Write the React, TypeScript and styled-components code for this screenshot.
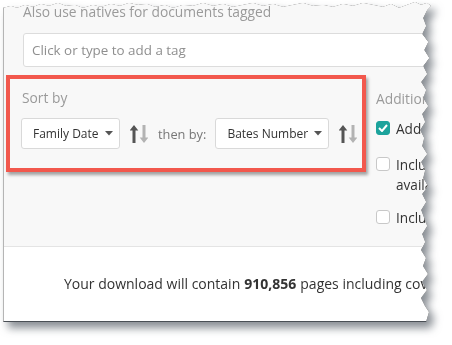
import styled, { createGlobalStyle } from "styled-components"

const GlobalStyle = createGlobalStyle`
  html, body {
    margin: 0;
    padding: 0;
    background: #ffffff;
    font-family: "Open Sans", "Liberation Sans", sans-serif;
  }
`

// torn paper outline of the clipped screenshot
const topEdge = [
  [0, 8], [8, 6], [14, 8], [22, 5], [30, 7], [38, 4], [46, 6], [55, 3], [63, 6], [72, 5],
  [80, 8], [90, 5], [98, 7], [108, 4], [117, 6], [126, 3], [135, 5], [144, 4], [152, 7],
  [162, 5], [170, 8], [180, 5], [190, 6], [200, 3], [210, 6], [220, 4], [230, 7], [240, 5],
  [250, 3], [260, 6], [270, 4], [280, 7], [290, 5], [300, 3], [310, 6], [320, 5], [330, 7],
  [340, 4], [350, 6], [360, 3], [370, 5], [380, 7], [388, 4], [396, 8], [404, 5], [412, 2],
  [418, 5], [424, 3], [428, 6],
]
const rightEdge = [
  [424, 10], [420, 18], [423, 26], [419, 34], [425, 42], [421, 50], [426, 58], [420, 66],
  [424, 74], [418, 82], [423, 90], [420, 98], [425, 106], [419, 114], [422, 122], [417, 130],
  [421, 138], [419, 146], [424, 154], [418, 162], [422, 170], [420, 178], [425, 186],
  [419, 194], [423, 202], [418, 210], [421, 218], [424, 226], [419, 234], [422, 242],
  [418, 250], [423, 258], [420, 266], [425, 274], [419, 282], [424, 290], [418, 298],
  [422, 306], [426, 312], [423, 322],
]
const tornPath = [...topEdge, ...rightEdge, [0, 322]]
  .map(([x, y]) => `${x}px ${y}px`)
  .join(", ")

function SortIcon() {
  return (
    <svg width="18" height="18" viewBox="0 0 18 18">
      <polygon points="4,0 8.3,5.5 5.5,5.5 5.5,18 2.5,18 2.5,5.5 -0.3,5.5" fill="#555" />
      <polygon points="14,18 18.3,12.5 15.5,12.5 15.5,0 12.5,0 12.5,12.5 9.7,12.5" fill="#b3b3b3" />
    </svg>
  )
}

function Caret() {
  return (
    <svg width="8" height="5" viewBox="0 0 8 5">
      <polygon points="0,0 8,0 4,4.5" fill="#555" />
    </svg>
  )
}

function App() {
  return (
    <Page>
      <GlobalStyle />
      <Shadow>
        <Panel>
          <Upper>
            <Faded>Also use natives for documents tagged</Faded>
            <TagInput>Click or type to add a tag</TagInput>
            <SortRow>
              <SortBox>
                <Faded>Sort by</Faded>
                <Controls>
                  <Select $width={99}>
                    Family Date <Caret />
                  </Select>
                  <SortIcon />
                  <ThenBy>then by:</ThenBy>
                  <Select $width={114}>
                    Bates Number <Caret />
                  </Select>
                  <SortIcon />
                </Controls>
              </SortBox>
              <Additional>
                <Faded>Additional options</Faded>
                <Option $top={10}>
                  <Check $checked>
                    <svg width="10" height="8" viewBox="0 0 10 8">
                      <polyline points="1,4 4,7 9,1" fill="none" stroke="#fff" strokeWidth="2" />
                    </svg>
                  </Check>
                  <span>Add cover sheets</span>
                </Option>
                <Option $top={16}>
                  <Check />
                  <span>Include natives where<br />available</span>
                </Option>
                <Option $top={13}>
                  <Check />
                  <span>Include text</span>
                </Option>
              </Additional>
            </SortRow>
          </Upper>
          <Footer>
            Your download will contain <b>910,856</b> pages including cover sheets
          </Footer>
        </Panel>
      </Shadow>
    </Page>
  )
}

export default App

const Page = styled.div`
  width: 452px;
  height: 345px;
  overflow: hidden;
  padding-left: 3px;
  box-sizing: border-box;
`

const Shadow = styled.div`
  width: 429px;
  filter: drop-shadow(0 0 0.7px rgba(0, 0, 0, 0.75)) drop-shadow(5px 6px 4px rgba(40, 50, 60, 0.55));
`

const Panel = styled.div`
  width: 429px;
  height: 322px;
  display: flex;
  flex-direction: column;
  overflow: hidden;
  clip-path: polygon(${tornPath});
  background: #fff;
  border-left: 1px solid #b5b5b5;
  border-bottom: 1px solid #4a4f55;
  box-sizing: border-box;
`

const Faded = styled.div`
  font-size: 13.8px;
  line-height: 20px;
  color: #9a9a9a;
  white-space: nowrap;
`

const Upper = styled.div`
  height: 247px;
  flex-shrink: 0;
  background: #f8f8f8;
  border-bottom: 1px solid #e4e4e4;
  padding: 2px 0 0 2px;
  box-sizing: border-box;
  display: flex;
  flex-direction: column;
  color: #333;

  & > ${Faded} {
    margin-left: 17px;
  }
`

const TagInput = styled.div`
  margin: 11px 0 0 17px;
  width: 440px;
  height: 34px;
  box-sizing: border-box;
  background: #fff;
  border: 1px solid #dcdcdc;
  border-radius: 3px;
  padding-left: 8px;
  display: flex;
  align-items: center;
  font-size: 13.4px;
  color: #8f8f8f;
  white-space: nowrap;
`

const SortRow = styled.div`
  display: flex;
  align-items: flex-start;
  margin-top: 8px;
  gap: 10px;
`

const SortBox = styled.div`
  width: 360px;
  height: 97px;
  box-sizing: border-box;
  border: 4.5px solid #f2584d;
  box-shadow: 2px 3px 3px rgba(0, 0, 0, 0.35);
  padding: 9px 0 0 11px;
  flex-shrink: 0;

  ${Faded} {
    margin-left: 1px;
  }
`

const Controls = styled.div`
  display: flex;
  align-items: center;
  gap: 10px;
  margin-top: 10px;

  svg {
    flex-shrink: 0;
  }
`

const Select = styled.div<{ $width: number }>`
  width: ${(p) => p.$width}px;
  height: 31px;
  flex-shrink: 0;
  box-sizing: border-box;
  background: #fff;
  border: 1px solid #d9d9d9;
  border-radius: 3px;
  display: flex;
  align-items: center;
  gap: 6px;
  padding: 0 0 0 11px;
  font-size: 12px;
  color: #333;
  white-space: nowrap;
`

const ThenBy = styled.span`
  font-size: 12.8px;
  color: #777;
  white-space: nowrap;
  margin-right: -1px;
`

const Additional = styled.div`
  display: flex;
  flex-direction: column;
  padding-top: 14px;
`

const Option = styled.div<{ $top: number }>`
  display: flex;
  align-items: flex-start;
  gap: 6px;
  margin-top: ${(p) => p.$top}px;
  font-size: 13.6px;
  line-height: 20px;
  color: #333;
  white-space: nowrap;
`

const Check = styled.div<{ $checked?: boolean }>`
  width: 14px;
  height: 14px;
  margin-top: 2px;
  box-sizing: border-box;
  border-radius: 3px;
  flex-shrink: 0;
  display: flex;
  align-items: center;
  justify-content: center;
  background: ${(p) => (p.$checked ? "#1ca39c" : "#fff")};
  border: 1px solid ${(p) => (p.$checked ? "#1ca39c" : "#c8c8c8")};
`

const Footer = styled.div`
  flex: 1;
  display: flex;
  align-items: center;
  padding: 0 0 0 60px;
  margin-top: -2px;
  font-size: 14px;
  color: #333;
  white-space: nowrap;

  b {
    margin: 0 4px;
    font-weight: 700;
  }
`
